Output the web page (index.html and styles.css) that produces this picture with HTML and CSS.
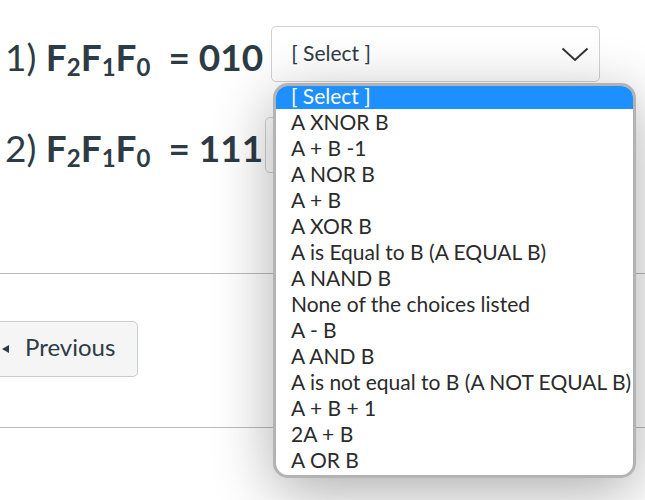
FILE: index.html
```html
<!DOCTYPE html>
<html>
<head>
<meta charset="utf-8">
<link rel="stylesheet" href="styles.css">
</head>
<body>
<div class="page">
  <div class="questions">
    <div class="question">
      <span class="label">1) <b>F<sub>2</sub>F<sub>1</sub>F<sub>0</sub>&nbsp; = 010</b></span>
      <div class="select">
        <span class="select-text">[ Select ]</span>
        <svg class="chev" width="28" height="15" viewBox="0 0 28 15"><path d="M1.5 1.5 L14 13 L26.5 1.5" fill="none" stroke="#333" stroke-width="2"/></svg>
      </div>
    </div>
    <div class="question q2">
      <span class="label">2) <b>F<sub>2</sub>F<sub>1</sub>F<sub>0</sub>&nbsp; = 111</b></span>
      <div class="select"></div>
    </div>
  </div>
  <hr class="rule">
  <div class="nav">
    <button class="prev"><span class="tri"></span>Previous</button>
  </div>
  <hr class="rule">
</div>
<ul class="dropdown">
  <li class="opt active">[ Select ]</li>
  <li class="opt">A XNOR B</li>
  <li class="opt">A + B -1</li>
  <li class="opt">A NOR B</li>
  <li class="opt">A + B</li>
  <li class="opt">A XOR B</li>
  <li class="opt">A is Equal to B (A EQUAL B)</li>
  <li class="opt">A NAND B</li>
  <li class="opt">None of the choices listed</li>
  <li class="opt">A - B</li>
  <li class="opt">A AND B</li>
  <li class="opt">A is not equal to B (A NOT EQUAL B)</li>
  <li class="opt">A + B + 1</li>
  <li class="opt">2A + B</li>
  <li class="opt">A OR B</li>
</ul>
</body>
</html>
```
FILE: styles.css
```css
html, body {
  margin: 0;
  padding: 0;
  background: #fff;
  overflow: hidden;
}
body {
  font-family: Lato, "Open Sans", sans-serif;
  color: #2d3b45;
  width: 645px;
  height: 500px;
  position: relative;
}
.page {
  padding-top: 26px;
}
.questions {
  display: flex;
  flex-direction: column;
  gap: 35px;
  padding-left: 5px;
}
.question {
  display: flex;
  align-items: center;
  height: 56px;
}
.label {
  font-size: 37px;
  font-weight: 400;
  white-space: nowrap;
  line-height: 1;
  position: relative;
  top: 2px;
}
.label b {
  font-weight: 700;
}
.label sub {
  font-size: 24px;
  vertical-align: -5px;
  line-height: 0;
}
.select {
  margin-left: 8px;
  box-sizing: border-box;
  width: 329px;
  height: 56px;
  border: 1px solid #cfd3d6;
  border-radius: 5px;
  background: #fff;
  display: flex;
  align-items: center;
  justify-content: space-between;
  padding: 0 10px 3px 19px;
}
.q2 .select {
  margin-left: 2px;
}
.select-text {
  font-size: 21px;
  color: #2d3b45;
}
.chev {
  display: block;
  position: relative;
  top: 2px;
}
.rule {
  margin: 0;
  border: 0;
  height: 1px;
  background: #b8bcbf;
}
.questions + .rule {
  margin-top: 100px;
}
.nav {
  height: 153px;
  display: flex;
  align-items: center;
}
.prev {
  margin-left: -12px;
  height: 56px;
  width: 150px;
  display: flex;
  align-items: center;
  background: #f5f5f5;
  border: 1px solid #c7cdd1;
  border-radius: 5px;
  font-family: Lato, sans-serif;
  font-size: 24px;
  color: #2d3b45;
  padding: 0 0 4px 13px;
  position: relative;
  top: -2px;
}
.tri {
  width: 0;
  height: 0;
  border-top: 4.5px solid transparent;
  border-bottom: 4.5px solid transparent;
  border-right: 7px solid #2d3b45;
  margin-right: 16px;
  position: relative;
  top: 2px;
}
.dropdown {
  position: absolute;
  left: 273px;
  top: 83px;
  width: 363px;
  margin: 0;
  padding: 0 0 2px 0;
  list-style: none;
  box-sizing: border-box;
  border: 3px solid #b3b3b3;
  border-radius: 15px;
  background: #fff;
  overflow: hidden;
  box-shadow: 0 14px 60px 0 rgba(0, 0, 0, 0.32);
}
.opt {
  font-size: 21px;
  height: 26px;
  line-height: 26px;
  padding-left: 15px;
  color: #2b2b2b;
  white-space: nowrap;
}
.opt.active {
  height: 23px;
  line-height: 20px;
  background: #1e8fff;
  color: #fff;
}
```
